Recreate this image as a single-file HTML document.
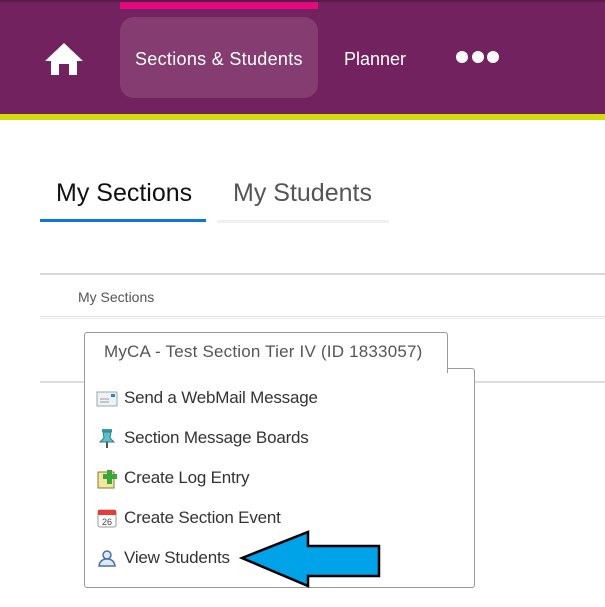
<!DOCTYPE html>
<html><head><style>
body{margin:0;width:605px;height:607px;background:#fff;position:relative;overflow:hidden;font-family:"Liberation Sans",sans-serif}
.a{position:absolute}
.mi{position:absolute;left:124px;font-size:17px;color:#333;letter-spacing:-0.2px}
</style></head><body>
<div class="a" style="left:0;top:0;width:605px;height:114px;background:#72235f"></div>
<div class="a" style="left:0;top:0;width:605px;height:2px;background:#5a1a4a"></div>
<div class="a" style="left:120px;top:2px;width:198px;height:7px;background:#e5097f"></div>
<div class="a" style="left:120px;top:17px;width:198px;height:81px;background:#853c71;border-radius:14px"></div>
<div class="a" style="left:0;top:114px;width:605px;height:6px;background:#d4dc0c"></div>
<svg class="a" style="left:44px;top:42px" width="40" height="34" viewBox="0 0 40 34"><path d="M20 1 L39 19 L33 19 L33 33 L25 33 L25 22 L15 22 L15 33 L7 33 L7 19 L1 19 Z" fill="#fff"/></svg>
<div class="a" style="left:135px;top:49px;color:#fff;font-size:18px;letter-spacing:0.3px">Sections &amp; Students</div>
<div class="a" style="left:344px;top:49px;color:#fff;font-size:18px">Planner</div>
<div class="a" style="left:456px;top:51px;width:12px;height:12px;border-radius:50%;background:#fff"></div>
<div class="a" style="left:472px;top:51px;width:12px;height:12px;border-radius:50%;background:#fff"></div>
<div class="a" style="left:487px;top:51px;width:12px;height:12px;border-radius:50%;background:#fff"></div>

<div class="a" style="left:56px;top:179px;font-size:25px;color:#111">My Sections</div>
<div class="a" style="left:233px;top:179px;font-size:25px;color:#555">My Students</div>
<div class="a" style="left:40px;top:219px;width:166px;height:3px;background:#0a78d8"></div>
<div class="a" style="left:217px;top:220px;width:172px;height:3px;background:#f0f0f0"></div>

<div class="a" style="left:40px;top:273px;width:565px;height:2px;background:#d8d8d8"></div>
<div class="a" style="left:78px;top:289px;font-size:14px;color:#555">My Sections</div>
<div class="a" style="left:40px;top:316px;width:565px;height:1px;background:#e4e4e4"></div>
<div class="a" style="left:40px;top:318px;width:565px;height:1px;background:#eee"></div>
<div class="a" style="left:40px;top:381px;width:565px;height:2px;background:#ddd"></div>

<div class="a" style="left:84px;top:368px;width:389px;height:218px;border:1px solid #999;border-radius:0 3px 3px 3px;background:#fff"></div>
<div class="a" style="left:84px;top:332px;width:362px;height:40px;border:1px solid #999;border-bottom:none;border-radius:3px 3px 0 0;background:#fff"></div>
<div class="a" style="left:104px;top:342px;font-size:17px;color:#555;letter-spacing:0.2px">MyCA - Test Section Tier IV (ID 1833057)</div>

<svg class="a" style="left:96px;top:391px" width="22" height="16"><rect x="1" y="1" width="20" height="14" fill="#eef2f6" stroke="#9aa" /><rect x="15" y="3" width="4" height="3" fill="#3a7bd5"/><line x1="4" y1="8" x2="13" y2="8" stroke="#999"/><line x1="4" y1="11" x2="13" y2="11" stroke="#999"/></svg>
<div class="mi" style="top:388px">Send a WebMail Message</div>
<svg class="a" style="left:98px;top:428px" width="18" height="22"><rect x="4" y="1" width="10" height="3" fill="#3a9aa0"/><path d="M5 4 L13 4 L12 10 L16 14 L2 14 L6 10 Z" fill="#5bc0c8" stroke="#2f7f86"/><rect x="8" y="14" width="2" height="6" fill="#555"/></svg>
<div class="mi" style="top:428px">Section Message Boards</div>
<svg class="a" style="left:96px;top:468px" width="22" height="22"><rect x="2" y="4" width="16" height="16" fill="#f3e7a0" stroke="#8a7a30"/><rect x="11" y="2" width="5" height="14" fill="#3aa63a"/><rect x="7" y="6" width="14" height="5" fill="#3aa63a"/></svg>
<div class="mi" style="top:468px">Create Log Entry</div>
<svg class="a" style="left:97px;top:508px" width="20" height="20"><rect x="1" y="2" width="18" height="17" rx="2" fill="#fff" stroke="#999"/><rect x="1" y="2" width="18" height="5" fill="#e53c3c"/><text x="10" y="17" font-size="9" text-anchor="middle" fill="#444" font-family="Liberation Sans">26</text></svg>
<div class="mi" style="top:508px">Create Section Event</div>
<svg class="a" style="left:97px;top:549px" width="20" height="18"><circle cx="10" cy="6" r="4" fill="#dfe8f5" stroke="#4a6fa5" stroke-width="1.5"/><path d="M2 17 Q3 10 10 10 Q17 10 18 17 Z" fill="#dfe8f5" stroke="#4a6fa5" stroke-width="1.5"/></svg>
<div class="mi" style="top:548px">View Students</div>

<svg class="a" style="left:236px;top:528px" width="150" height="62"><path d="M6 30 L72 4 L72 18 L143 18 L143 48 L72 48 L72 58 Z" fill="#00a2e8" stroke="#000" stroke-width="2.5" stroke-linejoin="miter"/></svg>
</body></html>
